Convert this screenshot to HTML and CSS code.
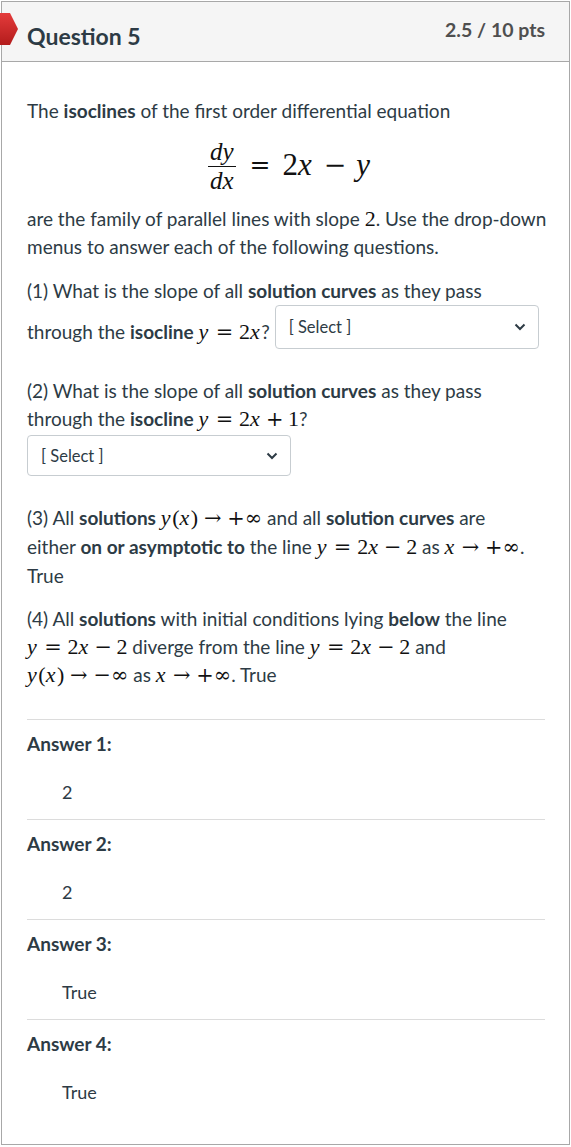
FILE: index.html
```html
<!DOCTYPE html>
<html>
<head>
<meta charset="utf-8">
<link rel="stylesheet" href="styles.css">
</head>
<body>
<div class="question">
  <svg class="marker" width="19" height="33" viewBox="0 0 19 33">
    <defs>
      <linearGradient id="rg" x1="0" y1="0" x2="0" y2="1">
        <stop offset="0" stop-color="#e43b3b"/>
        <stop offset="1" stop-color="#b31c1c"/>
      </linearGradient>
    </defs>
    <polygon points="0,0 10,0 18,16 10,32 0,32" fill="url(#rg)"/>
  </svg>
  <div class="header">
    <h2 class="title">Question 5</h2>
    <span class="pts">2.5 / 10 pts</span>
  </div>
  <div class="body">
    <p class="first">The <b>isoclines</b> of the first order differential equation</p>
    <div class="display">
      <span class="frac"><span class="num"><i>dy</i></span><span class="den"><i>dx</i></span></span>
      <span class="dr">=</span><span>2<i>x</i></span><span class="db">−</span><span><i>y</i></span>
    </div>
    <p class="tight">are the family of parallel lines with slope <span class="m">2</span>. Use the drop-down menus to answer each of the following questions.</p>
    <p class="q1">(1) What is the slope of all <b>solution curves</b> as they pass through the <b>isocline</b> <span class="m"><i>y</i><span class="r">=</span>2<i>x</i></span>? <span class="select one">[ Select ]<svg class="chev" width="12" height="8" viewBox="0 0 12 8"><polyline points="1.5,1.5 6,6 10.5,1.5" fill="none" stroke="#2d3b45" stroke-width="2"/></svg></span></p>
    <p class="q2">(2) What is the slope of all <b>solution curves</b> as they pass through the <b>isocline</b> <span class="m"><i>y</i><span class="r">=</span>2<i>x</i><span class="o">+</span>1</span>?</p>
    <div class="select two">[ Select ]<svg class="chev" width="12" height="8" viewBox="0 0 12 8"><polyline points="1.5,1.5 6,6 10.5,1.5" fill="none" stroke="#2d3b45" stroke-width="2"/></svg></div>
    <p class="q3">(3) All <b>solutions</b> <span class="m"><i>y</i>(<i>x</i>)<span class="r">→</span><span class="s">+∞</span></span> and all <b>solution curves</b> are<br>either <b>on or asymptotic to</b> the line <span class="m"><i>y</i><span class="r">=</span>2<i>x</i><span class="o">−</span>2</span> as <span class="m"><i>x</i><span class="r">→</span><span class="s">+∞</span></span>. True</p>
    <p class="q4">(4) All <b>solutions</b> with initial conditions lying <b>below</b> the line <span class="m"><i>y</i><span class="r">=</span>2<i>x</i><span class="o">−</span>2</span> diverge from the line <span class="m"><i>y</i><span class="r">=</span>2<i>x</i><span class="o">−</span>2</span> and <span class="m"><i>y</i>(<i>x</i>)<span class="r">→</span><span class="s">−∞</span></span> as <span class="m"><i>x</i><span class="r">→</span><span class="s">+∞</span></span>. True</p>
  </div>
  <div class="answers">
    <div class="answer"><div class="alabel">Answer 1:</div><div class="aval">2</div></div>
    <div class="answer"><div class="alabel">Answer 2:</div><div class="aval">2</div></div>
    <div class="answer"><div class="alabel">Answer 3:</div><div class="aval">True</div></div>
    <div class="answer"><div class="alabel">Answer 4:</div><div class="aval">True</div></div>
  </div>
</div>
</body>
</html>
```

FILE: styles.css
```css
html, body {
  margin: 0;
  padding: 0;
  background: #ffffff;
}
body {
  font-family: Lato, "Open Sans", sans-serif;
  color: #2d3b45;
}
.question {
  position: relative;
  margin: 1px 1px 0 1px;
  border: 1px solid #a8a8a8;
  height: 1144px;
  box-sizing: border-box;
}
.marker {
  position: absolute;
  left: -2px;
  top: 11px;
}
.header {
  display: flex;
  justify-content: space-between;
  align-items: flex-start;
  background: #f5f5f5;
  border-bottom: 1px solid #a8a8a8;
  height: 60px;
  box-sizing: border-box;
  padding: 0 24px 0 25px;
}
.title {
  margin: 18px 0 0 0;
  font-size: 23px;
  font-weight: 700;
  line-height: 32px;
  color: #2d3b45;
}
.pts {
  margin-top: 14px;
  font-size: 19.5px;
  font-weight: 700;
  line-height: 28px;
  color: #4f4f4f;
}
.body {
  padding: 35px 22px 0 25px;
  font-size: 19px;
  line-height: 28px;
}
.body p {
  margin: 0 0 16px 0;
}
.body p.first {
  margin-bottom: 0;
}
b {
  font-weight: 700;
}
.m {
  font-family: "Liberation Serif", "DejaVu Serif", serif;
  font-size: 22px;
  line-height: 1;
  color: #111;
  white-space: nowrap;
}
.m i {
  font-style: italic;
  margin-right: 0.07em;
}
.display i {
  font-style: italic;
}
.r {
  font-family: "DejaVu Serif", serif;
  font-size: 0.95em;
  margin: 0 0.28em;
}
.o {
  font-family: "DejaVu Serif", serif;
  font-size: 0.95em;
  margin: 0 0.22em;
}
.s {
  font-family: "DejaVu Serif", serif;
  font-size: 0.95em;
}
.display {
  display: flex;
  justify-content: center;
  align-items: center;
  font-family: "Liberation Serif", "DejaVu Serif", serif;
  color: #111;
  font-size: 31px;
  height: 80px;
  padding-left: 6px;
  padding-right: 2px;
}
.frac {
  display: inline-flex;
  flex-direction: column;
  align-items: center;
  font-size: 25px;
  line-height: 24px;
  margin-right: 14px;
  margin-top: 2px;
}
.num {
  border-bottom: 1.5px solid #111;
  padding: 0 2px 2px;
}
.den {
  padding-top: 2px;
}
.dr, .db {
  font-family: "DejaVu Serif", serif;
  font-size: 25px;
  margin: 0 12px 0 0;
}
.db {
  margin: 0 10px 0 12px;
  font-size: 27px;
}
.select {
  display: inline-flex;
  align-items: center;
  justify-content: space-between;
  box-sizing: border-box;
  width: 264px;
  height: 44px;
  border: 1px solid #c7cdd1;
  border-radius: 4px;
  padding: 0 12px 0 13px;
  font-size: 16.5px;
  line-height: 20px;
  color: #2d3b45;
  background: #fff;
}
.select.one {
  vertical-align: 6px;
}
.q1 {
  margin-bottom: 28px !important;
}
.q2 {
  margin-bottom: 2px !important;
}
.select.two {
  display: flex;
  height: 41px;
  margin-bottom: 27px;
}
.chev {
  display: block;
}
.q3 {
  line-height: 29px;
  margin-bottom: 15px !important;
}
.answers {
  padding: 14px 24px 0 25px;
}
.answer {
  border-top: 1px solid #dcdcdc;
  height: 100px;
  box-sizing: border-box;
  padding-top: 12px;
}
.alabel {
  font-size: 19px;
  font-weight: 700;
  line-height: 24px;
}
.aval {
  margin-top: 24px;
  padding-left: 35px;
  font-size: 18px;
  line-height: 24px;
  color: #2d3b45;
}
```
